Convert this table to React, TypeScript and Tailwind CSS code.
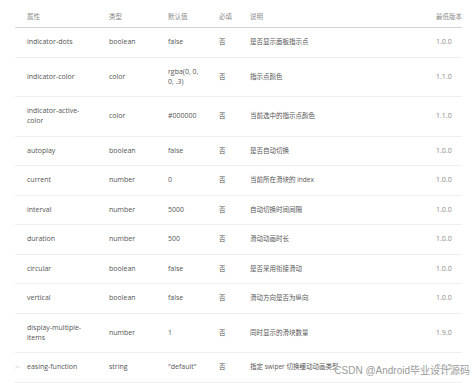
const rows = [
  { name: 'indicator-dots', type: 'boolean', def: 'false', desc: '是否显示面板指示点', ver: '1.0.0' },
  { name: 'indicator-color', type: 'color', def: 'rgba(0, 0, 0, .3)', desc: '指示点颜色', ver: '1.1.0' },
  { name: 'indicator-active-color', type: 'color', def: '#000000', desc: '当前选中的指示点颜色', ver: '1.1.0' },
  { name: 'autoplay', type: 'boolean', def: 'false', desc: '是否自动切换', ver: '1.0.0' },
  { name: 'current', type: 'number', def: '0', desc: '当前所在滑块的 index', ver: '1.0.0' },
  { name: 'interval', type: 'number', def: '5000', desc: '自动切换时间间隔', ver: '1.0.0' },
  { name: 'duration', type: 'number', def: '500', desc: '滑动动画时长', ver: '1.0.0' },
  { name: 'circular', type: 'boolean', def: 'false', desc: '是否采用衔接滑动', ver: '1.0.0' },
  { name: 'vertical', type: 'boolean', def: 'false', desc: '滑动方向是否为纵向', ver: '1.0.0' },
  { name: 'display-multiple-items', type: 'number', def: '1', desc: '同时显示的滑块数量', ver: '1.9.0' },
  { name: 'easing-function', type: 'string', def: '"default"', desc: '指定 swiper 切换缓动动画类型', ver: '2.6.5' },
]

const cols = 'grid grid-cols-[82px_59px_51px_31px_186px_26px] pl-[12px]'

const ChevronUp = () => (
  <svg className="w-[5px] h-[4px]" viewBox="0 0 10 6" fill="none" stroke="currentColor">
    <path d="M1 5l4-4 4 4" strokeWidth={1.2} strokeLinecap="round" strokeLinejoin="round" />
  </svg>
)

export default function App() {
  return (
    <div
      className="relative h-[383px] w-[474px] overflow-hidden bg-white text-[7px] text-[#555]"
      style={{ fontFamily: '"Open Sans", "Noto Sans CJK SC", sans-serif' }}
    >
      <div className="ml-[15px] w-[447px]">
        <div className={`${cols} pt-[12px] pb-[5px] leading-[10px] text-[6.5px] text-[#8a8a8a] border-b border-[#d4d4d4]`}>
          <span>属性</span>
          <span>类型</span>
          <span>默认值</span>
          <span>必填</span>
          <span>说明</span>
          <span>最低版本</span>
        </div>

        {rows.map((r, i) => (
          <div
            key={r.name}
            className={`${cols} relative items-center py-[9.25px] leading-[10px] border-b border-[#efefef]`}
          >
            {i === rows.length - 1 && (
              <span className="absolute left-[0px] top-[12px] text-[#b5b5b5]">
                <ChevronUp />
              </span>
            )}
            <span className="pr-[20px] break-words">{r.name}</span>
            <span>{r.type}</span>
            <span className="pr-[18px]">{r.def}</span>
            <span className="text-[6.5px]">否</span>
            <span className="text-[6.5px]">{r.desc}</span>
            <span className="text-[#888]">{r.ver}</span>
          </div>
        ))}
      </div>

      <div
        className="absolute right-[4px] top-[364px] text-[10px] leading-[14px] text-[#9a9a9a] whitespace-nowrap"
        style={{ fontFamily: '"Liberation Sans", "Noto Sans CJK SC", sans-serif', textShadow: '0 0 2px #fff, 0 0 1px #fff' }}
      >
        CSDN @Android毕业设计源码
      </div>
    </div>
  )
}
